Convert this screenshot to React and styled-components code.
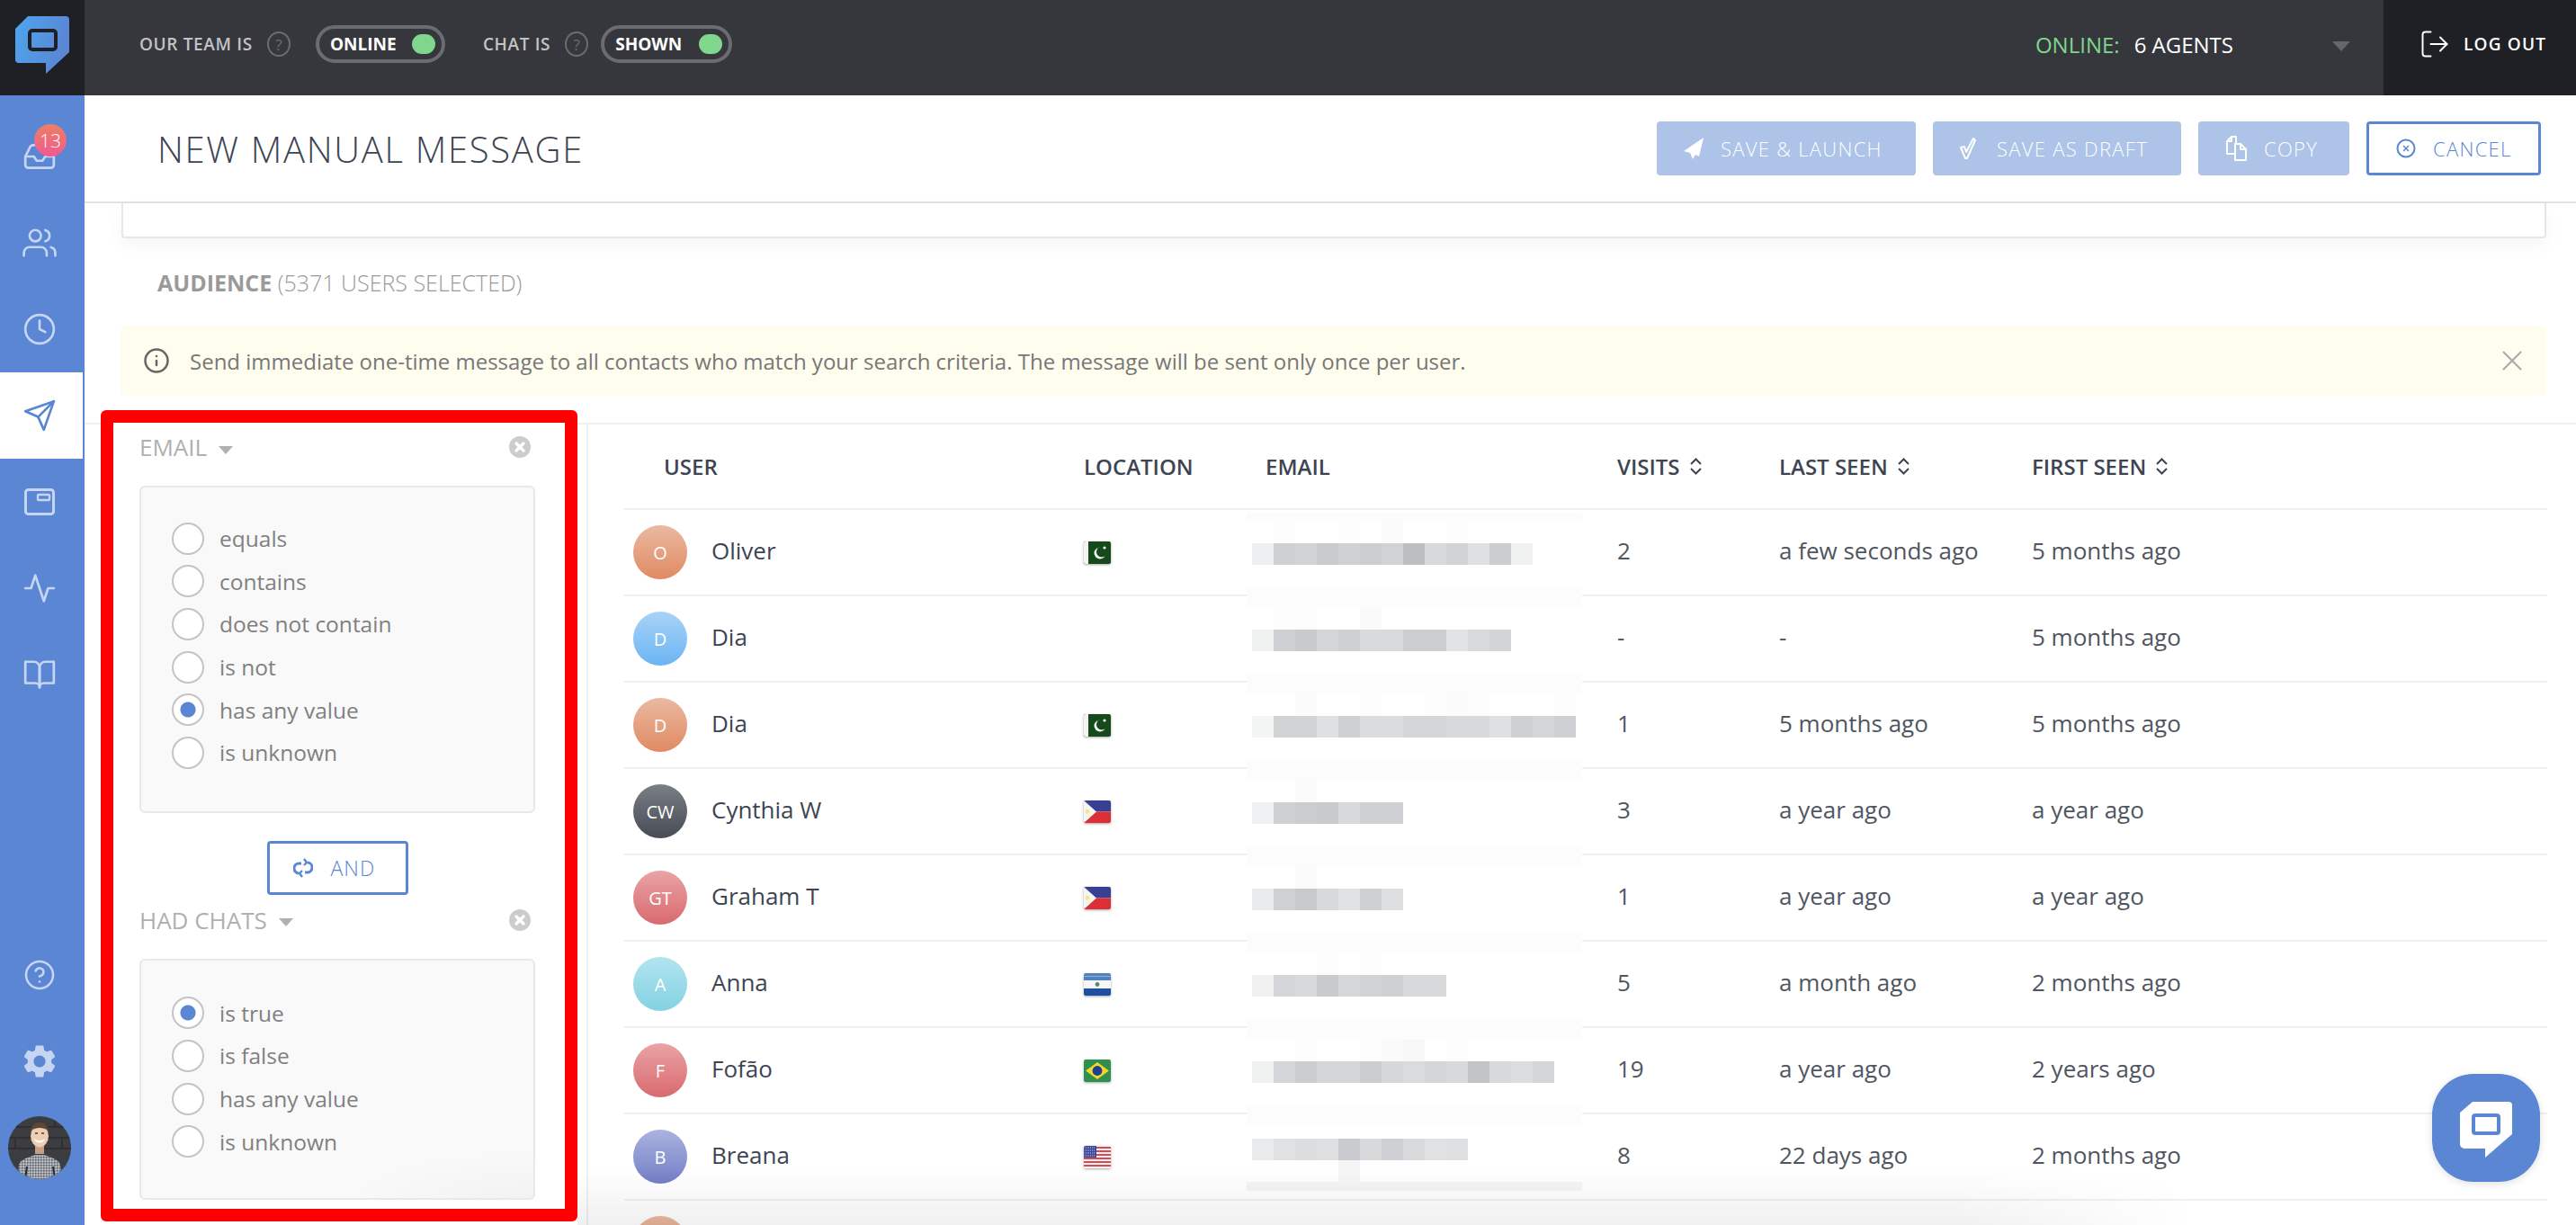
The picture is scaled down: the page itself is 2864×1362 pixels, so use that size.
import React from "react";
import styled, { createGlobalStyle } from "styled-components";
import {
  FiActivity,
  FiBookOpen,
  FiClock,
  FiHelpCircle,
  FiInbox,
  FiInfo,
  FiLogOut,
  FiSend,
  FiUsers,
  FiX,
} from "react-icons/fi";
import { MdSettings } from "react-icons/md";

const BLUE = "#5a86d4";
const INK = "#3d4452";

const Logo = () => (
  <svg width="60" height="64" viewBox="0 0 60 64">
    <defs>
      <linearGradient id="logoFill" x1="0" y1="0" x2="1" y2="0.3">
        <stop offset="0" stopColor="#4ea5ee" />
        <stop offset="1" stopColor="#5a86d4" />
      </linearGradient>
    </defs>
    <path
      d="M14 0H56a4 4 0 0 1 4 4V40L34 64V52H4a4 4 0 0 1-4-4V14Z"
      fill="url(#logoFill)"
    />
    <rect x="16" y="16" width="29" height="21" rx="3" fill="none" stroke="#1e2025" strokeWidth="4" />
  </svg>
);

const ChatGlyph = () => (
  <svg width="58" height="62" viewBox="0 0 58 62">
    <path d="M14 0H54a4 4 0 0 1 4 4V36L28 62V52H5a5 5 0 0 1-5-5V12Z" fill="#fff" />
    <rect x="15" y="15" width="28" height="20" rx="2" fill="none" stroke={BLUE} strokeWidth="4" />
  </svg>
);

const PlaneSolid = () => (
  <svg width="22" height="24" viewBox="0 0 22 24" fill="#fff">
    <path d="M22 0L0 15l7 2 3 7 3-5 4 2Z" />
  </svg>
);

const CheckOutline = () => (
  <svg width="22" height="24" viewBox="0 0 22 24" fill="none" stroke="#fff" strokeWidth="2" strokeLinejoin="round">
    <path d="M1 11l4-1 2 6 8-15 2 2-9 20H6Z" />
  </svg>
);

const CopyGlyph = () => (
  <svg width="24" height="28" viewBox="0 0 24 28" fill="none" stroke="#fff" strokeWidth="2" strokeLinejoin="round">
    <path d="M10 20H2V6l5-5h5v7" />
    <path d="M7 1v5H2" />
    <path d="M11 9h6l6 6v12H11Z" />
    <path d="M17 9v6h6" />
  </svg>
);

const CancelGlyph = () => (
  <svg width="22" height="22" viewBox="0 0 22 22" fill="none" stroke={BLUE} strokeWidth="2">
    <circle cx="11" cy="11" r="9.5" />
    <path d="M8 8l6 6M14 8l-6 6" strokeWidth="1.5" />
  </svg>
);

const SwapGlyph = () => (
  <svg width="22" height="24" viewBox="0 0 22 24" fill="none" stroke={BLUE} strokeWidth="3">
    <path d="M9 7H7a5.5 5.5 0 0 0-1 11" />
    <path d="M13 17h2a5.5 5.5 0 0 0 1-11" />
    <path d="M12 2l3 4-3 3" strokeWidth="2.4" />
    <path d="M10 15l-3 3 3 4" strokeWidth="2.4" />
  </svg>
);

const SortGlyph = () => (
  <svg width="15" height="19" viewBox="0 0 15 19" fill="none" stroke={INK} strokeWidth="2">
    <path d="M2 7l5.5-5.5L13 7" />
    <path d="M2 12l5.5 5.5L13 12" />
  </svg>
);

const CardGlyph = () => (
  <svg width="34" height="30" viewBox="0 0 34 30" fill="none" stroke="currentColor" strokeWidth="3">
    <rect x="1.5" y="1.5" width="31" height="27" rx="3" />
    <rect x="15" y="7" width="13" height="6" rx="1" strokeWidth="2.4" />
  </svg>
);

const ClearGlyph = () => (
  <svg width="24" height="24" viewBox="0 0 24 24">
    <circle cx="12" cy="12" r="12" fill="#cccccc" />
    <path d="M8 8l8 8M16 8l-8 8" stroke="#fff" strokeWidth="3.4" strokeLinecap="round" />
  </svg>
);

const Portrait = () => (
  <svg width="70" height="70" viewBox="0 0 70 70">
    <defs>
      <clipPath id="portraitClip">
        <circle cx="35" cy="35" r="35" />
      </clipPath>
      <pattern id="shirtCheck" width="3" height="3" patternUnits="userSpaceOnUse">
        <rect width="3" height="3" fill="#9a9ea5" />
        <rect width="1.5" height="1.5" fill="#5e626a" />
        <rect x="1.5" y="1.5" width="1.5" height="1.5" fill="#c6cace" />
      </pattern>
    </defs>
    <g clipPath="url(#portraitClip)">
      <rect width="70" height="70" fill="#3c3d41" />
      <path d="M0 12h70M0 24h70M0 36h70M10 0v12M30 12v12M52 0v12M8 24v12M60 24v12" stroke="#2c2d30" strokeWidth="1.5" />
      <path d="M11 70l1-16c1-6 13-9 18-11h10c5 2 17 5 18 11l2 16Z" fill="url(#shirtCheck)" />
      <path d="M19 70l2-14M52 70l-2-14" stroke="#2c2d30" strokeWidth="2" />
      <rect x="30" y="31" width="10" height="11" fill="#c9a083" />
      <ellipse cx="35" cy="22" rx="10" ry="12.5" fill="#eecdb2" />
      <path d="M25 17c0-6 5-10 10-10s10 4 10 10c-2-3-6-4-10-4s-8 1-10 4Z" fill="#5e4735" />
      <path d="M29 25c4 3 8 3 12 0-1 6-11 6-12 0Z" fill="#fff" />
      <path d="M30 19h3M37 19h3" stroke="#4d3a2b" strokeWidth="1.4" />
    </g>
  </svg>
);

const Flag = ({ kind }) => {
  if (kind === "pk") {
    return (
      <FlagBox>
        <svg width="30" height="25" viewBox="0 0 30 25">
          <rect width="30" height="25" fill="#174a1a" />
          <rect width="5" height="25" fill="#f4f4f4" />
          <circle cx="18" cy="13" r="6.5" fill="#f4f4f4" />
          <circle cx="20" cy="11.5" r="6" fill="#174a1a" />
          <circle cx="23" cy="7" r="1.6" fill="#f4f4f4" />
        </svg>
      </FlagBox>
    );
  }
  if (kind === "ph") {
    return (
      <FlagBox>
        <svg width="30" height="25" viewBox="0 0 30 25">
          <rect width="30" height="12.5" fill="#3a3f96" />
          <rect y="12.5" width="30" height="12.5" fill="#dc2e36" />
          <path d="M0 0L14 12.5 0 25Z" fill="#f6f6f0" />
          <circle cx="4" cy="12.5" r="2.4" fill="#f6e58a" />
        </svg>
      </FlagBox>
    );
  }
  if (kind === "sv") {
    return (
      <FlagBox>
        <svg width="30" height="25" viewBox="0 0 30 25">
          <rect width="30" height="8" fill="#4f81bd" />
          <rect y="3" width="30" height="1" fill="#8fb0d8" />
          <rect y="8" width="30" height="9" fill="#f6f6f6" />
          <rect y="17" width="30" height="8" fill="#1e4fa2" />
          <circle cx="15" cy="12.5" r="2.4" fill="#5b8a6a" />
        </svg>
      </FlagBox>
    );
  }
  if (kind === "br") {
    return (
      <FlagBox>
        <svg width="30" height="25" viewBox="0 0 30 25">
          <rect width="30" height="25" fill="#2e8f4f" />
          <path d="M15 3L28 12.5 15 22 2 12.5Z" fill="#f2d42c" />
          <circle cx="15" cy="12.5" r="5.4" fill="#1d3f8f" />
        </svg>
      </FlagBox>
    );
  }
  return (
    <FlagBox>
      <svg width="30" height="25" viewBox="0 0 30 25">
        <rect width="30" height="25" fill="#f5f5f5" />
        {[0, 4, 8, 12, 16, 20].map((y) => (
          <rect key={y} y={y + 1} width="30" height="2" fill="#d9494f" />
        ))}
        <rect width="14" height="13" fill="#3d4a9a" />
        <path d="M1 2h12M1 5h12M1 8h12M1 11h12" stroke="#c7cbe8" strokeWidth="1" strokeDasharray="1 1" />
      </svg>
    </FlagBox>
  );
};

const rows = [
  {
    initials: "O", name: "Oliver", tone: "orange", flag: "pk", visits: "2", last: "a few seconds ago", first: "5 months ago",
    top: 3,
    strips: [
      { h: 10, band: true },
      { h: 24, cells: ["#fff", "#fdfdfd", "#fff", "#fff", "#fdfdfd", "#fff", "#fbfbfb", "#fff", "#fff", "#fcfcfc"] },
      { h: 24, cells: ["#eeeff0", "#cfd0d3", "#d2d3d6", "#cacbcf", "#d0d1d4", "#cdced1", "#d1d2d5", "#bdbec2", "#d8d9db", "#d2d3d6", "#dfe0e2", "#cccdd0", "#eff1f0"] },
    ],
  },
  {
    initials: "D", name: "Dia", tone: "blue", flag: null, visits: "-", last: "-", first: "5 months ago",
    strips: [
      { h: 24, band: true },
      { h: 24, cells: ["#fff", "#fcfcfc", "#fcfcfc", "#fff", "#fff", "#fafafa"] },
      { h: 24, cells: ["#f0f1f1", "#cfd0d4", "#c9cacd", "#d5d6d8", "#cfd0d3", "#d9dadc", "#d9dadc", "#cdced2", "#cdced2", "#e2e3e4", "#d9dadc", "#d3d4d6"] },
    ],
  },
  {
    initials: "D", name: "Dia", tone: "orange", flag: "pk", visits: "1", last: "5 months ago", first: "5 months ago",
    strips: [
      { h: 24, band: true },
      { h: 24, cells: ["#fff", "#fff", "#fbfbfb", "#fff", "#fff", "#fcfcfc", "#fff", "#fff", "#fcfcfc", "#fbfbfb", "#fbfcfb", "#fff", "#fff", "#fff", "#fcfcfc"] },
      { h: 24, cells: ["#f3f4f4", "#d2d3d5", "#d2d3d5", "#dfe0e1", "#cecfd2", "#dbdcde", "#dbdcde", "#d4d5d7", "#d4d5d7", "#d8d9db", "#d8d9db", "#dfe0e1", "#cecfd2", "#d5d6d8", "#cecfd2"] },
    ],
  },
  {
    initials: "CW", name: "Cynthia W", tone: "dark", flag: "ph", visits: "3", last: "a year ago", first: "a year ago",
    strips: [
      { h: 24, band: true },
      { h: 24, cells: ["#fff", "#fff", "#fbfbfb"] },
      { h: 24, cells: ["#eff0f1", "#cfd0d3", "#cbccd0", "#c9cacd", "#d8d9db", "#ccd0d3", "#ced0d3"] },
    ],
  },
  {
    initials: "GT", name: "Graham T", tone: "red", flag: "ph", visits: "1", last: "a year ago", first: "a year ago",
    strips: [
      { h: 24, band: true },
      { h: 24, cells: ["#fff", "#fff", "#fbfbfb"] },
      { h: 24, cells: ["#e9eaeb", "#d0d1d4", "#c8c9cc", "#d8d9db", "#e0e1e3", "#cfd0d3", "#dedfe1"] },
    ],
  },
  {
    initials: "A", name: "Anna", tone: "cyan", flag: "sv", visits: "5", last: "a month ago", first: "2 months ago",
    strips: [
      { h: 24, band: true },
      { h: 24, cells: ["#fff", "#fff", "#fff", "#fcfcfc", "#fff", "#fcfcfc"] },
      { h: 24, cells: ["#f1f1f2", "#d4d5d8", "#d8d9db", "#c9cacd", "#d6d7d9", "#d2d3d6", "#cfd0d3", "#d8d9db", "#d8d9db"] },
    ],
  },
  {
    initials: "F", name: "Fofão", tone: "red", flag: "br", visits: "19", last: "a year ago", first: "2 years ago",
    strips: [
      { h: 24, band: true },
      { h: 24, cells: ["#fff", "#fff", "#fcfcfc", "#fff", "#fff", "#fcfcfc", "#fafafa", "#f8f8f8", "#fff", "#fcfcfc"] },
      { h: 24, cells: ["#eff1f0", "#d4d5d8", "#cbccd0", "#d5d6d8", "#d5d6d8", "#cbccd0", "#d6d7d9", "#dadbdd", "#d4d5d7", "#d8d9db", "#c2c3c7", "#d8d9db", "#dcdddf", "#d5d6d8"] },
    ],
  },
  {
    initials: "B", name: "Breana", tone: "purple", flag: "us", visits: "8", last: "22 days ago", first: "2 months ago",
    strips: [
      { h: 24, band: true },
      { h: 14 },
      { h: 24, cells: ["#e9eaeb", "#e0e1e3", "#dcdddf", "#dfe0e2", "#cacbce", "#d8d9db", "#cfd0d3", "#d9dadc", "#e0e1e3", "#dee0e1"] },
      { h: 24, cells: ["#fff", "#fff", "#fff", "#fff", "#f6f6f6"] },
      { h: 10, band: true, dim: true },
    ],
  },
];

const emailRules = [
  { label: "equals" },
  { label: "contains" },
  { label: "does not contain" },
  { label: "is not" },
  { label: "has any value", on: true },
  { label: "is unknown" },
];

const chatRules = [
  { label: "is true", on: true },
  { label: "is false" },
  { label: "has any value" },
  { label: "is unknown" },
];

const Rules = ({ items, second }) => (
  <RuleBox $second={second}>
    {items.map((item) => (
      <Rule key={item.label}>
        <Radio $on={item.on} />
        {item.label}
      </Rule>
    ))}
  </RuleBox>
);

const App = () => {
  return (
    <Page>
      <Global />
      <TopBar>
        <LogoCell>
          <Logo />
        </LogoCell>
        <StatusGroup>
          <TeamLabel>OUR TEAM IS</TeamLabel>
          <HelpMark $after={28}>?</HelpMark>
          <Pill $w={144}>
            ONLINE
            <Dot />
          </Pill>
          <TeamLabel>CHAT IS</TeamLabel>
          <HelpMark $after={14}>?</HelpMark>
          <Pill $w={146}>
            SHOWN
            <Dot />
          </Pill>
        </StatusGroup>
        <Agents>
          <OnlineWord>ONLINE:</OnlineWord>
          6 AGENTS
          <AgentCaret />
        </Agents>
        <Logout>
          <FiLogOut size={36} strokeWidth={1.3} />
          LOG OUT
        </Logout>
      </TopBar>
      <Body>
        <Sidebar>
          <NavGroup>
            <NavItem>
              <FiInbox size={38} strokeWidth={1.7} />
              <Badge>13</Badge>
            </NavItem>
            <NavItem>
              <FiUsers size={38} strokeWidth={1.7} />
            </NavItem>
            <NavItem>
              <FiClock size={38} strokeWidth={1.7} />
            </NavItem>
            <NavItem $active>
              <FiSend size={38} strokeWidth={1.7} />
            </NavItem>
            <NavItem>
              <CardGlyph />
            </NavItem>
            <NavItem>
              <FiActivity size={38} strokeWidth={1.7} />
            </NavItem>
            <NavItem>
              <FiBookOpen size={38} strokeWidth={1.7} />
            </NavItem>
          </NavGroup>
          <NavGroup>
            <NavItem>
              <FiHelpCircle size={36} strokeWidth={1.7} />
            </NavItem>
            <NavItem>
              <MdSettings size={44} />
            </NavItem>
            <NavItem>
              <Portrait />
            </NavItem>
          </NavGroup>
        </Sidebar>
        <Main>
          <Header>
            <Title>NEW MANUAL MESSAGE</Title>
            <Actions>
              <Action $w={288}>
                <PlaneSolid />
                SAVE &amp; LAUNCH
              </Action>
              <Action $w={276}>
                <CheckOutline />
                SAVE AS DRAFT
              </Action>
              <Action $w={168}>
                <CopyGlyph />
                COPY
              </Action>
              <Action $w={194} $outline>
                <CancelGlyph />
                CANCEL
              </Action>
            </Actions>
          </Header>
          <CardEnd />
          <Audience>
            <strong>AUDIENCE</strong> (5371 USERS SELECTED)
          </Audience>
          <Alert>
            <FiInfo size={30} />
            <AlertText>
              Send immediate one-time message to all contacts who match your search criteria. The message will be sent only once per user.
            </AlertText>
            <FiX size={38} strokeWidth={1.3} />
          </Alert>
          <Columns>
            <FilterPanel>
              <FilterHead>
                <FilterName>EMAIL</FilterName>
                <FilterCaret />
                <ClearGlyph />
              </FilterHead>
              <Rules items={emailRules} />
              <AndButton>
                <SwapGlyph />
                AND
              </AndButton>
              <FilterHead>
                <FilterName>HAD CHATS</FilterName>
                <FilterCaret />
                <ClearGlyph />
              </FilterHead>
              <Rules items={chatRules} second />
            </FilterPanel>
            <Table>
              <HeadRow>
                <HeadCell $user>USER</HeadCell>
                <HeadCell>LOCATION</HeadCell>
                <HeadCell>EMAIL</HeadCell>
                <HeadCell>
                  VISITS <SortGlyph />
                </HeadCell>
                <HeadCell>
                  LAST SEEN <SortGlyph />
                </HeadCell>
                <HeadCell>
                  FIRST SEEN <SortGlyph />
                </HeadCell>
              </HeadRow>
              {rows.map((row, i) => (
                <Row key={i}>
                  <UserCell>
                    <Avatar $tone={row.tone}>{row.initials}</Avatar>
                    <Name>{row.name}</Name>
                  </UserCell>
                  <FlagCell>{row.flag && <Flag kind={row.flag} />}</FlagCell>
                  <Cell>
                    <EmailBlur $top={row.top}>
                      {row.strips.map((strip, j) => (
                        <Strip key={j} $h={strip.h} $band={strip.band} $dim={strip.dim}>
                          {strip.cells &&
                            strip.cells.map((c, k) => <Pixel key={k} $c={c} />)}
                        </Strip>
                      ))}
                    </EmailBlur>
                  </Cell>
                  <Cell>{row.visits}</Cell>
                  <Cell>{row.last}</Cell>
                  <Cell>{row.first}</Cell>
                </Row>
              ))}
              <Row>
                <UserCell>
                  <Avatar $tone="orange" />
                </UserCell>
              </Row>
            </Table>
          </Columns>
        </Main>
      </Body>
      <BottomShade />
      <ChatBubble>
        <ChatGlyph />
      </ChatBubble>
    </Page>
  );
};
export default App;

const Global = createGlobalStyle`
  html, body {
    margin: 0;
    padding: 0;
    height: 100%;
    background: #fff;
    font-family: "Open Sans", "Liberation Sans", sans-serif;
  }
  * {
    box-sizing: border-box;
  }
`;

const Page = styled.div`
  position: relative;
  width: 100vw;
  height: 100vh;
  overflow: hidden;
  display: flex;
  flex-direction: column;
`;

const TopBar = styled.header`
  height: 106px;
  flex: none;
  display: flex;
  align-items: center;
  background-color: #36373d;
`;

const LogoCell = styled.div`
  width: 94px;
  height: 100%;
  display: flex;
  align-items: center;
  justify-content: center;
  padding-bottom: 6px;
  background-color: #1e2025;
  margin-right: 61px;
`;

const StatusGroup = styled.div`
  margin-bottom: 8px;
  display: flex;
  align-items: center;
`;

const TeamLabel = styled.span`
  font-size: 19px;
  font-weight: 600;
  color: #c2c3c6;
  letter-spacing: 0.65px;
`;

const HelpMark = styled.span`
  width: 26px;
  height: 28px;
  margin-left: 16px;
  margin-right: ${(p) => p.$after}px;
  border: 2px solid #6b6c72;
  border-radius: 50%;
  display: flex;
  align-items: center;
  justify-content: center;
  font-size: 17px;
  color: #6b6c72;
`;

const Pill = styled.div`
  width: ${(p) => p.$w}px;
  height: 42px;
  padding: 0 7px 0 12px;
  margin-right: 42px;
  display: flex;
  align-items: center;
  justify-content: space-between;
  border: 4px solid #6b6c72;
  border-radius: 21px;
  font-size: 19px;
  font-weight: 700;
  color: #fff;
`;

const Dot = styled.span`
  width: 26px;
  height: 22px;
  border-radius: 11px;
  background-color: #7fd68c;
`;

const Agents = styled.div`
  margin: 0 0 8px auto;
  display: flex;
  align-items: center;
  font-size: 24px;
  color: #fff;
`;

const OnlineWord = styled.span`
  color: #7fd68c;
  margin-right: 16px;
`;

const AgentCaret = styled.span`
  margin: 4px 37px 0 110px;
  border-left: 10px solid transparent;
  border-right: 10px solid transparent;
  border-top: 11px solid #66676c;
`;

const Logout = styled.div`
  width: 214px;
  height: 100%;
  padding: 0 0 8px 39px;
  display: flex;
  align-items: center;
  gap: 14px;
  background-color: #1e2025;
  color: #fff;
  font-size: 19px;
  font-weight: 600;
  letter-spacing: 1.2px;
`;

const Body = styled.div`
  flex: 1;
  min-height: 0;
  display: flex;
`;

const Sidebar = styled.nav`
  width: 94px;
  flex: none;
  padding: 20px 0 38px;
  display: flex;
  flex-direction: column;
  justify-content: space-between;
  background-color: ${BLUE};
`;

const NavGroup = styled.div`
  display: flex;
  flex-direction: column;
`;

const NavItem = styled.div`
  position: relative;
  height: 96px;
  width: ${(p) => (p.$active ? "92px" : "94px")};
  padding-right: ${(p) => (p.$active ? "4px" : "6px")};
  display: flex;
  align-items: center;
  justify-content: center;
  color: ${(p) => (p.$active ? BLUE : "#c6d6f2")};
  background-color: ${(p) => (p.$active ? "#fff" : "transparent")};
`;

const Badge = styled.span`
  position: absolute;
  top: 12px;
  left: 38px;
  width: 36px;
  height: 36px;
  border-radius: 50%;
  display: flex;
  align-items: center;
  justify-content: center;
  background: linear-gradient(to bottom, #ed7f62, #ef5a93);
  color: #fff;
  font-size: 21px;
  font-weight: 300;
`;

const Main = styled.main`
  flex: 1;
  min-width: 0;
  display: flex;
  flex-direction: column;
  overflow: hidden;
`;

const Header = styled.div`
  height: 120px;
  flex: none;
  padding: 0 39px 0 81px;
  display: flex;
  align-items: center;
  justify-content: space-between;
  border-bottom: 2px solid #e2e2e2;
`;

const Title = styled.h1`
  margin: 0;
  font-size: 40px;
  font-weight: 300;
  letter-spacing: 1.7px;
  color: ${INK};
`;

const Actions = styled.div`
  display: flex;
  gap: 19px;
`;

const Action = styled.button`
  width: ${(p) => p.$w}px;
  height: 60px;
  padding: 0 0 0 30px;
  display: flex;
  align-items: center;
  gap: 19px;
  border-radius: 4px;
  border: ${(p) => (p.$outline ? `3px solid ${BLUE}` : "none")};
  background-color: ${(p) => (p.$outline ? "#fff" : "#adc3e8")};
  color: ${(p) => (p.$outline ? BLUE : "#fff")};
  font-family: inherit;
  font-size: 22px;
  font-weight: 300;
  letter-spacing: 1.3px;
`;

const CardEnd = styled.div`
  height: 39px;
  flex: none;
  margin: 0 33px 0 41px;
  border: 2px solid #e6e6e6;
  border-top: none;
  border-radius: 0 0 4px 4px;
  box-shadow: 0 8px 20px rgba(0, 0, 0, 0.04);
`;

const Audience = styled.div`
  height: 30px;
  flex: none;
  margin-top: 34px;
  padding-left: 81px;
  line-height: 30px;
  font-size: 25px;
  font-weight: 300;
  color: #9a9a9a;

  strong {
    font-weight: 700;
  }
`;

const Alert = styled.div`
  height: 78px;
  flex: none;
  margin: 33px 33px 0 40px;
  padding: 0 19px 0 25px;
  display: flex;
  align-items: center;
  gap: 22px;
  border-radius: 6px;
  background-color: #fffdee;
  color: #666;

  svg:last-child {
    color: #aaa;
  }
`;

const AlertText = styled.div`
  flex: 1;
  font-size: 24px;
  color: #777;
`;

const Columns = styled.div`
  flex: 1;
  min-height: 0;
  margin-top: 30px;
  display: flex;
  border-top: 2px solid #f0f0f0;
`;

const FilterPanel = styled.aside`
  position: relative;
  z-index: 3;
  width: 530px;
  height: 902px;
  flex: none;
  margin: -16px 10px 0 18px;
  padding: 10px 33px 0 29px;
  border: 14px solid #ff0000;
  border-radius: 6px;
  background-color: #fff;
`;

const FilterHead = styled.div`
  height: 34px;
  margin-bottom: 26px;
  padding-right: 5px;
  display: flex;
  align-items: center;

  svg {
    margin-left: auto;
  }
`;

const FilterName = styled.span`
  font-size: 26px;
  font-weight: 500;
  color: #b0b0b0;
`;

const FilterCaret = styled.span`
  margin: 6px 0 0 13px;
  border-left: 8px solid transparent;
  border-right: 8px solid transparent;
  border-top: 9px solid #b0b0b0;
`;

const RuleBox = styled.div`
  padding: ${(p) => (p.$second ? "35px 0 39px 34px" : "33px 0 41px 34px")};
  border: 2px solid #e8e8e8;
  border-radius: 6px;
  background: ${(p) =>
    p.$second
      ? "radial-gradient(ellipse 200px 50px at 100% 100%, #f2f2f2, #f9f9f9)"
      : "#f9f9f9"};
`;

const Rule = styled.div`
  height: 47.6px;
  display: flex;
  align-items: center;
  gap: 17px;
  font-size: 24.5px;
  color: #808080;
`;

const Radio = styled.span`
  width: 36px;
  height: 36px;
  flex: none;
  border-radius: 50%;
  border: 2px solid #c4c4c4;
  background: ${(p) =>
    p.$on
      ? `radial-gradient(circle, ${BLUE} 0, ${BLUE} 8px, #fff 9px)`
      : "#fff"};
`;

const AndButton = styled.button`
  width: 157px;
  height: 60px;
  margin: 31px auto 11px;
  padding-left: 26px;
  display: flex;
  align-items: center;
  gap: 20px;
  border: 3px solid ${BLUE};
  border-radius: 4px;
  background-color: #fff;
  color: ${BLUE};
  font-family: inherit;
  font-size: 23px;
  letter-spacing: 1px;
  font-weight: 300;
`;

const Table = styled.section`
  flex: 1;
  min-width: 0;
  padding: 0 32px 0 40px;
  border-left: 2px solid #f0f0f0;
`;

const gridColumns = "511px 202px 391px 180px 281px 1fr";

const HeadRow = styled.div`
  height: 95px;
  display: grid;
  grid-template-columns: ${gridColumns};
  align-items: center;
  border-bottom: 2px solid #f0f0f0;
`;

const HeadCell = styled.div`
  display: flex;
  align-items: center;
  gap: 10px;
  padding-left: ${(p) => (p.$user ? "44px" : "0")};
  font-size: 24px;
  font-weight: 600;
  color: ${INK};
`;

const Row = styled.div`
  height: 96px;
  display: grid;
  grid-template-columns: ${gridColumns};
  align-items: center;
  border-bottom: 2px solid #f0f0f0;
`;

const Cell = styled.div`
  position: relative;
  padding-bottom: 4px;
  font-size: 26px;
  color: #50555f;
`;

const FlagCell = styled(Cell)`
  padding-bottom: 0;
`;

const UserCell = styled(Cell)`
  padding: 0 0 0 10px;
  display: flex;
  align-items: center;
  gap: 27px;
  color: ${INK};
`;

const Name = styled.span`
  padding-bottom: 4px;
`;

const tones = {
  orange: "#eab9a2, #e08a62",
  blue: "#a9d3f8, #6bb5f3",
  dark: "#7a7e85, #474c55",
  red: "#e9a3a5, #d96a6e",
  cyan: "#b2e4ee, #83d2e3",
  purple: "#abb3e0, #727fc6",
};

const Avatar = styled.span`
  width: 60px;
  height: 60px;
  border-radius: 50%;
  display: flex;
  align-items: center;
  justify-content: center;
  background: linear-gradient(to bottom, ${(p) => tones[p.$tone]});
  color: #fff;
  font-size: 20px;
  font-weight: 500;
`;

const FlagBox = styled.span`
  display: block;
  width: 30px;
  height: 25px;
  border-radius: 2px;
  overflow: hidden;
  box-shadow: 0 1px 3px rgba(0, 0, 0, 0.35);

  svg {
    display: block;
  }
`;

const EmailBlur = styled.div`
  position: absolute;
  z-index: 1;
  left: -21px;
  top: ${(p) => (p.$top !== undefined ? p.$top - 45 : -56)}px;
  width: 373px;
  background-color: #fff;
`;

const Strip = styled.div`
  height: ${(p) => p.$h}px;
  padding-left: 6px;
  display: flex;
  background-color: ${(p) =>
    p.$dim ? "#f5f5f5" : p.$band ? "#fcfcfc" : "transparent"};
`;

const Pixel = styled.span.attrs((p) => ({ style: { backgroundColor: p.$c } }))`
  width: 24px;
  height: 100%;
`;

const BottomShade = styled.div`
  position: absolute;
  z-index: 2;
  left: 642px;
  right: 424px;
  bottom: 0;
  height: 62px;
  pointer-events: none;
  background: linear-gradient(to bottom, rgba(0, 0, 0, 0), rgba(0, 0, 0, 0.06));
  mask-image: linear-gradient(to right, #000 85%, transparent);
`;

const ChatBubble = styled.div`
  position: absolute;
  z-index: 4;
  left: 2704px;
  top: 1194px;
  width: 120px;
  height: 120px;
  border-radius: 46px;
  display: flex;
  align-items: center;
  justify-content: center;
  padding-top: 4px;
  background-color: ${BLUE};
  box-shadow: 0 2px 10px rgba(0, 0, 0, 0.12);
`;
